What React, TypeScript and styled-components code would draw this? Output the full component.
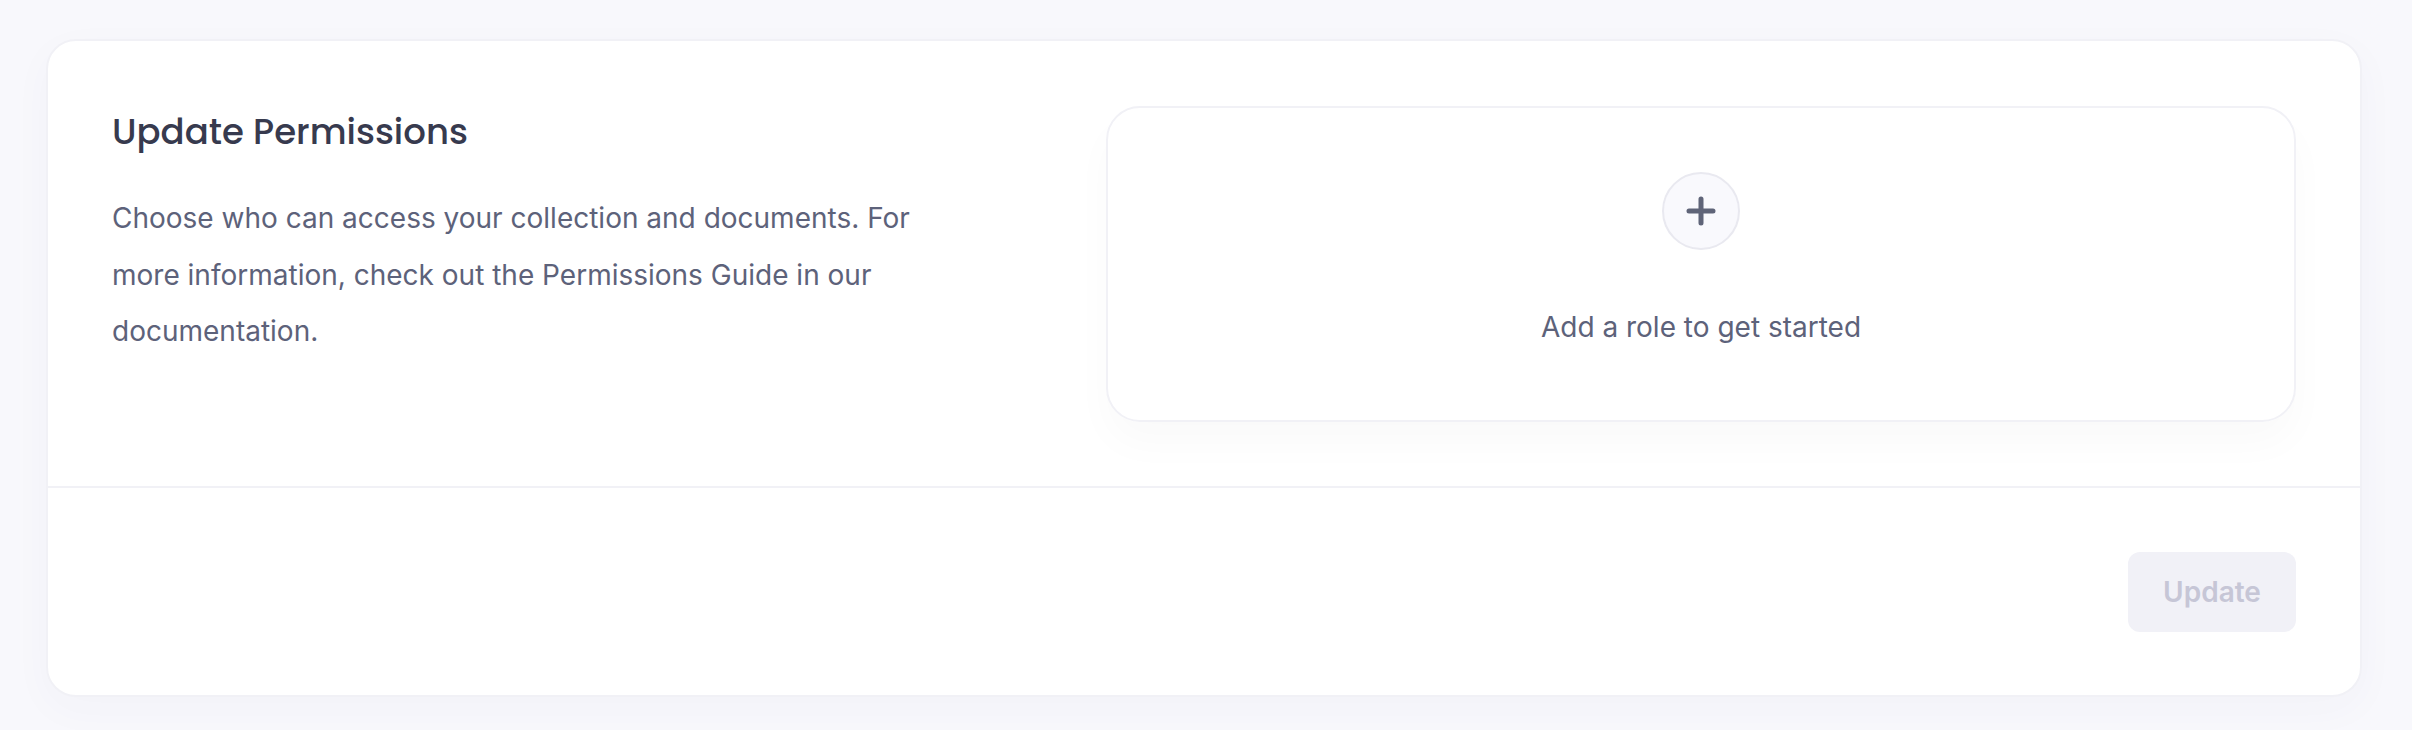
import { createGlobalStyle } from "styled-components";
import styled from "styled-components";

const GlobalStyle = createGlobalStyle`
  html, body {
    margin: 0;
    padding: 0;
    background: #f8f8fc;
    font-family: Inter, "Noto Sans", sans-serif;
  }
  * { box-sizing: border-box; }
`;

const Page = styled.div`
  min-height: 730px;
  padding: 39px 50px 35px 46px;
`;

const Card = styled.section`
  background: #fff;
  border: 2px solid #f1f1f6;
  border-radius: 30px;
  box-shadow: 0 12px 40px rgba(60, 60, 120, 0.03);
`;

const Top = styled.div`
  display: grid;
  grid-template-columns: minmax(0, 1fr) 1190px;
  gap: 64px;
  padding: 65px 64px 64px;
`;

const Intro = styled.div`
  max-width: 830px;
`;

const Title = styled.h2`
  margin: 0;
  font-family: Poppins, Inter, "Noto Sans", sans-serif;
  font-weight: 500;
  font-size: 35.5px;
  line-height: 52px;
  color: #373a4e;
`;

const Description = styled.p`
  margin: 32px 0 0;
  font-size: 28px;
  line-height: 56.5px;
  color: #5d627a;
`;

const EmptyPanel = styled.div`
  border: 2px solid #f1f1f6;
  border-radius: 34px;
  padding: 64px 64px 65px;
  display: flex;
  flex-direction: column;
  align-items: center;
  gap: 49px;
  box-shadow: 0 22px 40px rgba(0, 0, 0, 0.025);
`;

const AddButton = styled.button`
  width: 78px;
  height: 78px;
  border-radius: 50%;
  border: 2px solid #e9e9f0;
  background: #f9f9fd;
  display: flex;
  align-items: center;
  justify-content: center;
  padding: 0;
  cursor: pointer;
  color: #5f6478;
`;

const EmptyText = styled.div`
  font-size: 28px;
  line-height: 56px;
  color: #5d627a;
`;

const Footer = styled.div`
  border-top: 2px solid #f1f1f6;
  padding: 64px 64px 63px;
  display: flex;
  justify-content: flex-end;
`;

const SubmitButton = styled.button`
  width: 168px;
  height: 80px;
  border: none;
  border-radius: 12px;
  background: #f1f1f7;
  color: #c6c6d6;
  font-family: Inter, "Noto Sans", sans-serif;
  font-size: 28px;
  font-weight: 600;
  &:disabled { cursor: not-allowed; }
`;

function PlusIcon() {
  return (
    <svg width="30" height="30" viewBox="0 0 30 30" fill="none">
      <path d="M15 3v24M3 15h24" stroke="currentColor" strokeWidth="5" strokeLinecap="round" />
    </svg>
  );
}

export default function App() {
  return (
    <>
      <GlobalStyle />
      <Page>
        <Card>
          <Top>
            <Intro>
              <Title>Update Permissions</Title>
              <Description>
                Choose who can access your collection and documents. For more information, check out the Permissions
                Guide in our documentation.
              </Description>
            </Intro>
            <EmptyPanel>
              <AddButton type="button" aria-label="Add role">
                <PlusIcon />
              </AddButton>
              <EmptyText>Add a role to get started</EmptyText>
            </EmptyPanel>
          </Top>
          <Footer>
            <SubmitButton type="button" disabled>
              Update
            </SubmitButton>
          </Footer>
        </Card>
      </Page>
    </>
  );
}
